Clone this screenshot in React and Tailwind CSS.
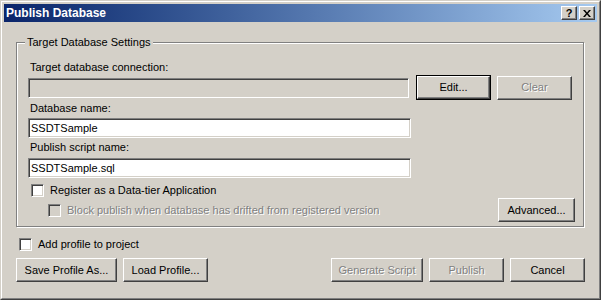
import React from "react";

const raised =
  "border border-t-white border-l-white border-r-[#404040] border-b-[#404040] shadow-[inset_-1px_-1px_0_#808080]";
const sunken =
  "border border-t-[#808080] border-l-[#808080] border-r-white border-b-white shadow-[inset_1px_1px_0_#404040,inset_-1px_-1px_0_#d4d0c8]";
const dimText = "text-[#808080] [text-shadow:1px_1px_0_#ffffff]";

function Button({ children, w, disabled, isDefault }) {
  if (isDefault) {
    return (
      <div className={`${w} h-[25px] border border-black flex`}>
        <div className={`flex-1 ${raised} flex items-center justify-center`}>{children}</div>
      </div>
    );
  }
  return (
    <div className={`${w} h-[24px] ${raised} flex items-center justify-center ${disabled ? dimText : ""}`}>
      {children}
    </div>
  );
}

function TextBox({ value, disabled }) {
  return (
    <div className={`w-[383px] h-[20px] ${sunken} ${disabled ? "bg-[#d4d0c8]" : "bg-white"} flex items-center px-[2px]`}>
      {value}
    </div>
  );
}

function Check({ label, disabled }) {
  return (
    <div className="flex items-center gap-[6px]">
      <div className={`w-[13px] h-[13px] ${sunken} ${disabled ? "bg-[#d4d0c8]" : "bg-white"}`} />
      <span className={disabled ? dimText : ""}>{label}</span>
    </div>
  );
}

export default function App() {
  return (
    <div
      className="w-[601px] h-[300px] bg-[#d4d0c8] text-black text-[11px] leading-[13px] border border-t-[#d4d0c8] border-l-[#d4d0c8] border-r-[#404040] border-b-[#404040]"
      style={{ fontFamily: "Tahoma, 'Liberation Sans', sans-serif" }}
    >
      <div className="h-full border border-t-white border-l-white border-r-[#808080] border-b-[#808080] p-[2px] flex flex-col">
        {/* title bar */}
        <div className="h-[18px] shrink-0 bg-gradient-to-r from-[#0a246a] to-[#a6caf0] flex items-center pl-[2px] pr-[2px]">
          <span className="text-white font-bold text-[12px] flex-1">Publish Database</span>
          <div className={`w-[16px] h-[14px] ${raised} bg-[#d4d0c8] flex items-center justify-center font-bold text-[11px]`}>?</div>
          <div className={`w-[16px] h-[14px] ${raised} bg-[#d4d0c8] flex items-center justify-center ml-[2px]`}>
            <svg width="8" height="7" viewBox="0 0 8 7">
              <path d="M0 0h2l2 2.5L6 0h2L5 3.5 8 7H6L4 4.5 2 7H0l3-3.5z" fill="black" />
            </svg>
          </div>
        </div>

        <div className="flex-1 pl-[12px] pt-[20px]">
          {/* group box */}
          <div className="relative w-[568px] h-[185px] border border-[#808080] shadow-[inset_1px_1px_0_#ffffff,1px_1px_0_#ffffff] px-[11px] pt-[18px]">
            <span className="absolute left-[8px] top-[-7px] bg-[#d4d0c8] px-[2px]">Target Database Settings</span>

            <div className="pl-[2px]">Target database connection:</div>
            <div className="flex items-center mt-[1px]">
              <TextBox disabled />
              <div className="ml-[7px]">
                <Button w="w-[75px]" isDefault>Edit...</Button>
              </div>
              <div className="ml-[6px]">
                <Button w="w-[75px]" disabled>Clear</Button>
              </div>
            </div>

            <div className="pl-[2px] mt-[2px]">Database name:</div>
            <div className="mt-[3px]">
              <TextBox value="SSDTSample" />
            </div>

            <div className="pl-[2px] mt-[3px]">Publish script name:</div>
            <div className="mt-[4px]">
              <TextBox value="SSDTSample.sql" />
            </div>

            <div className="mt-[6px] pl-[3px]">
              <Check label="Register as a Data-tier Application" />
            </div>
            <div className="flex items-end justify-between mt-[1px]">
              <div className="pl-[20px] mb-[5px]">
                <Check label="Block publish when database has drifted from registered version" disabled />
              </div>
              <div className="mr-[-3px]">
                <Button w="w-[77px]">Advanced...</Button>
              </div>
            </div>
          </div>

          <div className="mt-[11px] pl-[3px]">
            <Check label="Add profile to project" />
          </div>

          <div className="flex mt-[7px]">
            <Button w="w-[101px]">Save Profile As...</Button>
            <div className="ml-[6px]">
              <Button w="w-[85px]">Load Profile...</Button>
            </div>
            <div className="ml-auto flex gap-[6px] pr-[12px]">
              <Button w="w-[92px]" disabled>Generate Script</Button>
              <Button w="w-[75px]" disabled>Publish</Button>
              <Button w="w-[75px]">Cancel</Button>
            </div>
          </div>
        </div>
      </div>
    </div>
  );
}
